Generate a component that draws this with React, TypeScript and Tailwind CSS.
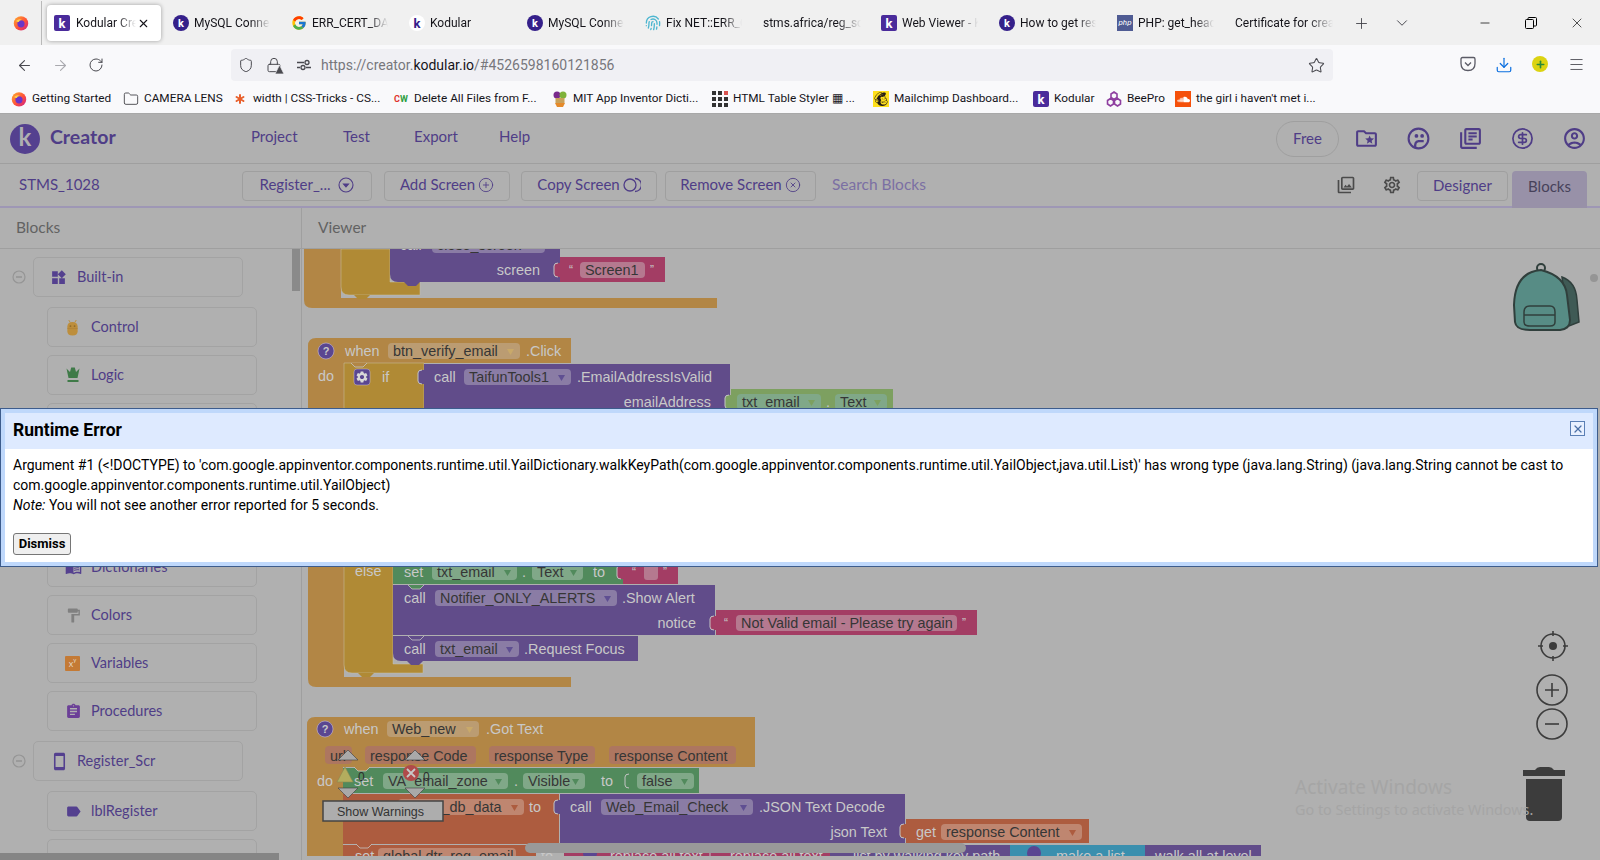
import {
  ArrowLeft,
  ArrowRight,
  Asterisk,
  ChevronDown,
  CircleDollarSign,
  CirclePlus,
  CircleX,
  Download,
  Fingerprint,
  Folder,
  Lock,
  Menu,
  Minus,
  Plus,
  RotateCw,
  Shield,
  Star,
  X,
} from 'lucide-react';
import type { ReactNode } from 'react';
import { FaSoundcloud } from 'react-icons/fa';
import { FcGoogle } from 'react-icons/fc';
import {
  MdAssignment,
  MdFormatPaint,
  MdLabel,
  MdMenuBook,
  MdOutlineAccountCircle,
  MdOutlineFolderSpecial,
  MdOutlineLibraryBooks,
  MdOutlinePhotoLibrary,
  MdOutlineSettings,
  MdOutlineSmartphone,
  MdSettings,
  MdWidgets,
} from 'react-icons/md';
import { SiMailchimp } from 'react-icons/si';

const KSquare = () => (
  <span className="flex h-4 w-4 items-center justify-center rounded-[2px] bg-[#4a2b9b] text-[13px] leading-none font-bold text-white">k</span>
);

const KRound = () => (
  <span className="flex h-4 w-4 items-center justify-center rounded-full bg-[#35208a] text-[11px] leading-none font-bold text-white">k</span>
);

const KPlain = () => (
  <span className="flex h-4 w-4 items-center justify-center rounded-full bg-white text-[13px] leading-none font-bold text-[#35208a]">k</span>
);

const FirefoxIcon = () => (
  <svg viewBox="0 0 16 16" className="h-4 w-4">
    <defs>
      <linearGradient id="ff" x1="0" y1="0" x2="1" y2="1">
        <stop offset="0" stopColor="#ffb02e" />
        <stop offset="0.55" stopColor="#ff4f3a" />
        <stop offset="1" stopColor="#c81e8f" />
      </linearGradient>
    </defs>
    <circle cx="8" cy="8.4" r="7.2" fill="url(#ff)" />
    <circle cx="8" cy="8.8" r="3.6" fill="#6a35c9" />
    <path d="M3 6 Q6 3 9 5 Q6 5 6 7 Q3.5 7 3 6Z" fill="#ffd24a" />
  </svg>
);

const PhpIcon = () => (
  <span className="flex h-4 w-4 items-center justify-center bg-[#4f5b93] text-[8px] leading-none text-white italic">php</span>
);

const CWIcon = () => (
  <span className="flex h-4 w-4 items-center justify-center text-[9px] leading-none font-bold">
    <span className="text-[#e0342b]">C</span>
    <span className="text-[#2c9e3f]">W</span>
  </span>
);

const MitIcon = () => (
  <svg viewBox="0 0 16 16" className="h-4 w-4">
    <circle cx="5" cy="4" r="3.5" fill="#7a2a8c" />
    <circle cx="11" cy="4" r="3.5" fill="#7fb23a" />
    <rect x="3.5" y="7" width="9" height="5" fill="#c9a15a" />
    <path d="M3 12 H13 L11 16 H5Z" fill="#e58a2a" />
  </svg>
);

const GridIcon = () => (
  <span className="grid h-4 w-4 grid-cols-3 gap-[1.5px]">
    {['#333', '#333', '#d9534f', '#333', '#333', '#333', '#333', '#333', '#333'].map((c, i) => (
      <span key={i} style={{ background: c }} />
    ))}
  </span>
);

const MailchimpIcon = () => (
  <span className="flex h-4 w-4 items-center justify-center bg-[#ffe01b]">
    <SiMailchimp className="h-[14px] w-[14px] text-[#241c15]" />
  </span>
);

const BeeIcon = () => (
  <svg viewBox="0 0 16 16" className="h-4 w-4" fill="none" stroke="#8f3fa0" strokeWidth="1.6">
    <path d="M8 1 L11 3 V6.5 L8 8.5 L5 6.5 V3Z" />
    <path d="M4.5 7.5 L7.5 9.5 V13 L4.5 15 L1.5 13 V9.5Z" />
    <path d="M11.5 7.5 L14.5 9.5 V13 L11.5 15 L8.5 13 V9.5Z" />
  </svg>
);

const tabs: { title: string; icon?: ReactNode }[] = [
  { title: 'MySQL Connection', icon: <KRound /> },
  { title: 'ERR_CERT_DATE_INVALID', icon: <FcGoogle className="h-4 w-4" /> },
  { title: 'Kodular', icon: <KPlain /> },
  { title: 'MySQL Connection', icon: <KRound /> },
  { title: 'Fix NET::ERR_CERT', icon: <Fingerprint className="h-4 w-4 text-[#4db6d0]" /> },
  { title: 'stms.africa/reg_screen' },
  { title: 'Web Viewer - Kodular', icon: <KSquare /> },
  { title: 'How to get response', icon: <KRound /> },
  { title: 'PHP: get_headers', icon: <PhpIcon /> },
  { title: 'Certificate for creator' },
];

function TabBar() {
  return (
    <div className="flex h-[45px] bg-[#f0f0f0] pt-[1px]">
      <div className="flex w-[42px] items-center justify-center border-r border-[#b9b9b9] pl-[1px]">
        <FirefoxIcon />
      </div>
      <div className="ml-[5px] flex h-[36px] w-[114px] items-center gap-[6px] self-center rounded-[4px] bg-white pl-[7px] shadow-[0_0_4px_rgba(0,0,0,0.35)]">
        <KSquare />
        <span className="mr-[-5px] w-[60px] overflow-hidden text-[12px] whitespace-nowrap text-[#15141a] [mask-image:linear-gradient(to_right,black_70%,transparent)]">Kodular Creator</span>
        <X className="h-[13px] w-[13px] text-[#15141a]" />
      </div>
      <div className="ml-[2px] flex">
        {tabs.map((tab, i) => (
          <div key={i} className="flex w-[118px] items-center gap-[5px] pl-[10px]">
            {tab.icon && <span className="h-4 w-4 shrink-0">{tab.icon}</span>}
            <span className={`${tab.icon ? 'w-[76px]' : 'w-[98px]'} overflow-hidden text-[12px] whitespace-nowrap text-[#15141a] [mask-image:linear-gradient(to_right,black_75%,transparent)]`}>{tab.title}</span>
          </div>
        ))}
      </div>
      <div className="flex w-[36px] items-center justify-center">
        <Plus className="h-[17px] w-[17px] text-[#3f3f46]" strokeWidth={1.25} />
      </div>
      <div className="flex w-[46px] items-center justify-center">
        <ChevronDown className="h-[18px] w-[18px] text-[#3f3f46]" strokeWidth={1.25} />
      </div>
      <div className="ml-auto flex">
        <div className="flex w-[46px] items-center justify-center">
          <Minus className="h-[14px] w-[14px] text-black" strokeWidth={1.25} />
        </div>
        <div className="flex w-[46px] items-center justify-center">
          <svg viewBox="0 0 12 12" className="h-[12px] w-[12px]" fill="none" stroke="#000" strokeWidth="1">
            <rect x="0.5" y="2.5" width="8" height="9" rx="1" />
            <path d="M3 2.5 V1.5 Q3 0.5 4 0.5 H10.5 Q11.5 0.5 11.5 1.5 V8 Q11.5 9 10.5 9 H8.5" />
          </svg>
        </div>
        <div className="flex w-[46px] items-center justify-center">
          <X className="h-[16px] w-[16px] text-black" strokeWidth={1} />
        </div>
      </div>
    </div>
  );
}

function NavBar() {
  return (
    <div className="flex h-[40px] items-center bg-[#f9f9fb] pl-[6px] pr-[6px]">
      <div className="flex w-[36px] justify-center">
        <ArrowLeft className="h-[17px] w-[17px] text-[#4a4a50]" strokeWidth={1.5} />
      </div>
      <div className="flex w-[36px] justify-center">
        <ArrowRight className="h-[17px] w-[17px] text-[#a9a9ae]" strokeWidth={1.5} />
      </div>
      <div className="flex w-[36px] justify-center">
        <RotateCw className="h-[16px] w-[16px] text-[#4a4a50]" strokeWidth={1.5} />
      </div>
      <div className="ml-[117px] flex h-[32px] w-[1102px] items-center rounded-[4px] bg-[#f0f0f4] pl-[7px] pr-[8px]">
        <Shield className="h-4 w-4 text-[#4a4a50]" strokeWidth={1.5} />
        <span className="relative ml-[12px] h-4 w-4">
          <Lock className="h-4 w-4 text-[#4a4a50]" strokeWidth={1.5} />
          <svg viewBox="0 0 10 10" className="absolute right-[-2px] bottom-[-1px] h-[9px] w-[9px]">
            <path d="M5 0 L10 10 H0Z" fill="#4a4a50" stroke="#f0f0f4" strokeWidth="0.8" />
          </svg>
        </span>
        <svg viewBox="0 0 16 16" className="ml-[14px] h-4 w-4" fill="none" stroke="#4a4a50" strokeWidth="1.3">
          <path d="M1 5.5 H8 M1 10.5 H4 M10 10.5 H15" />
          <circle cx="11" cy="5.5" r="2" />
          <circle cx="7" cy="10.5" r="2" />
        </svg>
        <span className="ml-[9px] text-[14px] whitespace-nowrap text-[#77777c]">
          https://creator.<span className="text-[#15141a]">kodular.io</span>/#4526598160121856
        </span>
        <Star className="ml-auto h-[17px] w-[17px] text-[#4a4a50]" strokeWidth={1.5} />
      </div>
      <div className="ml-auto flex">
        <div className="flex w-[36px] justify-center">
          <svg viewBox="0 0 16 16" className="h-4 w-4" fill="none" stroke="#5b5b66" strokeWidth="1.3">
            <path d="M2.5 1.5 H13.5 Q15 1.5 15 3 V7.5 Q15 14.5 8 14.5 Q1 14.5 1 7.5 V3 Q1 1.5 2.5 1.5Z" />
            <path d="M5 6.5 L8 9.5 L11 6.5" />
          </svg>
        </div>
        <div className="flex w-[36px] justify-center">
          <Download className="h-[18px] w-[18px] text-[#0b6fe0]" strokeWidth={1.6} />
        </div>
        <div className="flex w-[36px] justify-center">
          <span className="flex h-4 w-4 items-center justify-center rounded-full bg-[#dcd312]">
            <Plus className="h-[11px] w-[11px] text-[#2a8a3a]" strokeWidth={3.5} />
          </span>
        </div>
        <div className="flex w-[36px] justify-center">
          <Menu className="h-[17px] w-[17px] text-[#4a4a50]" strokeWidth={1.25} />
        </div>
      </div>
    </div>
  );
}

const bookmarks: { title: string; icon: ReactNode; width: string }[] = [
  { title: 'Getting Started', icon: <FirefoxIcon />, width: 'w-[112px]' },
  { title: 'CAMERA LENS', icon: <Folder className="h-4 w-4 text-[#4a4a50]" strokeWidth={1.4} />, width: 'w-[109px]' },
  { title: 'width | CSS-Tricks - CS...', icon: <Asterisk className="h-4 w-4 text-[#e8602c]" strokeWidth={3} />, width: 'w-[161px]' },
  { title: 'Delete All Files from F...', icon: <CWIcon />, width: 'w-[159px]' },
  { title: 'MIT App Inventor Dicti...', icon: <MitIcon />, width: 'w-[160px]' },
  { title: 'HTML Table Styler ▦ ...', icon: <GridIcon />, width: 'w-[161px]' },
  { title: 'Mailchimp Dashboard...', icon: <MailchimpIcon />, width: 'w-[160px]' },
  { title: 'Kodular', icon: <KSquare />, width: 'w-[73px]' },
  { title: 'BeePro', icon: <BeeIcon />, width: 'w-[69px]' },
  {
    title: "the girl i haven't met i...",
    icon: (
      <span className="flex h-4 w-4 items-center justify-center bg-[#f5500a]">
        <FaSoundcloud className="h-[13px] w-[13px] text-white" />
      </span>
    ),
    width: 'w-[160px]',
  },
];

function BookmarksBar() {
  return (
    <div className="flex h-[29px] items-center border-b border-[#a8a8a8] bg-[#f9f9fb] pl-[11px]">
      {bookmarks.map((b) => (
        <div key={b.title} className={`${b.width} flex items-center gap-[5px]`}>
          <span className="h-4 w-4 shrink-0">{b.icon}</span>
          <span className="text-[11.8px] whitespace-nowrap text-[#15141a]">{b.title}</span>
        </div>
      ))}
    </div>
  );
}

const purple = 'text-[#4f3d87]';

const FaceIcon = () => (
  <svg viewBox="0 0 24 24" className="h-[25px] w-[25px]" fill="none" stroke="currentColor" strokeWidth="2">
    <circle cx="12" cy="12" r="9.5" />
    <circle cx="10" cy="9.5" r="1.8" fill="currentColor" stroke="none" />
    <circle cx="15.5" cy="9.5" r="1.8" fill="currentColor" stroke="none" />
    <path d="M9 21 Q8 15 12 14.5 H17" strokeWidth="2.2" />
  </svg>
);

function AppHeader() {
  return (
    <div className="flex h-[50px] items-center border-b border-[#9f9f9f] font-['Lato',sans-serif]">
      <div className="flex w-[251px] items-center pl-[10px]">
        <span className="flex h-[30px] w-[30px] items-center justify-center rounded-full bg-[#54408f] pb-[3px] text-[24px] leading-none font-bold text-[#b0b0b0]">k</span>
        <span className={`ml-[10px] pb-[4px] text-[19.5px] font-bold ${purple}`}>Creator</span>
      </div>
      <div className={`flex pb-[4px] text-[15px] ${purple}`}>
        <span className="w-[92px]">Project</span>
        <span className="w-[71px]">Test</span>
        <span className="w-[85px]">Export</span>
        <span>Help</span>
      </div>
      <div className="ml-auto flex items-center">
        <span className={`mr-[1px] flex h-[36px] w-[63px] items-center justify-center rounded-full border border-[#9f9f9f] text-[15px] ${purple}`}>Free</span>
        <span className={`flex w-[52px] justify-center ${purple}`}>
          <MdOutlineFolderSpecial className="h-[25px] w-[25px]" />
        </span>
        <span className={`flex w-[52px] justify-center ${purple}`}>
          <FaceIcon />
        </span>
        <span className={`flex w-[52px] justify-center ${purple}`}>
          <MdOutlineLibraryBooks className="h-[25px] w-[25px]" />
        </span>
        <span className={`flex w-[52px] justify-center ${purple}`}>
          <CircleDollarSign className="h-[23px] w-[23px]" strokeWidth={1.8} />
        </span>
        <span className={`flex w-[52px] justify-center ${purple}`}>
          <MdOutlineAccountCircle className="h-[25px] w-[25px]" />
        </span>
      </div>
    </div>
  );
}

const DropCircle = () => (
  <svg viewBox="0 0 16 16" className="h-[16px] w-[16px]" fill="none" stroke="currentColor" strokeWidth="1.1">
    <circle cx="8" cy="8" r="7" />
    <path d="M5.5 7 H10.5 L8 10Z" fill="currentColor" />
  </svg>
);

const CopyCircle = () => (
  <svg viewBox="0 0 18 16" className="h-[16px] w-[18px]" fill="none" stroke="currentColor" strokeWidth="1.3">
    <circle cx="7" cy="8" r="6" />
    <path d="M12 1.5 A6.5 6.5 0 0 1 12 14.5" />
  </svg>
);

function ToolButton({ className, children }: { className: string; children: ReactNode }) {
  return (
    <div className={`${className} flex h-[30px] items-center justify-center rounded-[4px] border border-[#9f9f9f] pb-[3px] text-[15px] ${purple}`}>
      {children}
    </div>
  );
}

function ScreenBar() {
  return (
    <div className="flex h-[44px] items-start border-b-2 border-[#9e97b5] pt-[7px] font-['Lato',sans-serif]">
      <span className={`w-[242px] pl-[19px] text-[15px] leading-[27px] ${purple}`}>STMS_1028</span>
      <ToolButton className="w-[130px] gap-[8px]">
        Register_... <DropCircle />
      </ToolButton>
      <ToolButton className="ml-[12px] w-[126px] gap-[3px]">
        Add Screen <CirclePlus className="h-[16px] w-[16px]" strokeWidth={1.3} />
      </ToolButton>
      <ToolButton className="ml-[11px] w-[136px] gap-[3px]">
        Copy Screen <CopyCircle />
      </ToolButton>
      <ToolButton className="ml-[8px] w-[151px] gap-[3px]">
        Remove Screen <CircleX className="h-[16px] w-[16px]" strokeWidth={1.3} />
      </ToolButton>
      <span className="ml-[16px] text-[15.5px] leading-[27px] text-[#7b6fa3]">Search Blocks</span>
      <div className="ml-auto flex items-start pr-[13px]">
        <span className="mt-[4px] mr-[26px] text-[#4b4b4b]">
          <MdOutlinePhotoLibrary className="h-[20px] w-[20px]" />
        </span>
        <span className="mt-[4px] mr-[15px] text-[#4b4b4b]">
          <MdOutlineSettings className="h-[20px] w-[20px]" />
        </span>
        <span className={`flex h-[30px] w-[91px] items-center justify-center rounded-[4px] border border-[#9f9f9f] pb-[2px] text-[15px] ${purple}`}>Designer</span>
        <span className="ml-[4px] flex h-[37px] w-[75px] items-center justify-center rounded-t-[4px] bg-[#9891a8] pb-[6px] text-[15px] text-[#47425a]">Blocks</span>
      </div>
    </div>
  );
}

const MinusCircle = () => (
  <svg viewBox="0 0 14 14" className="h-[14px] w-[14px]" fill="none" stroke="#959595" strokeWidth="1.2">
    <circle cx="7" cy="7" r="6" />
    <path d="M4 7 H10" strokeWidth="1.6" />
  </svg>
);

const AndroidIcon = () => (
  <svg viewBox="0 0 16 18" className="h-[17px] w-[15px]">
    <path d="M4 1 L5.5 3.5 M12 1 L10.5 3.5" stroke="#bd8e3c" strokeWidth="1" />
    <path d="M2.5 8 Q2.5 3 8 3 Q13.5 3 13.5 8 V13 Q13.5 17.5 8 17.5 Q2.5 17.5 2.5 13Z" fill="#bd8e3c" />
    <circle cx="5.8" cy="7.5" r="1" fill="#8f6a2a" />
    <circle cx="10.2" cy="7.5" r="1" fill="#8f6a2a" />
    <path d="M2.5 10 H13.5" stroke="#a97f35" strokeWidth="0.6" />
  </svg>
);

const CrownIcon = () => (
  <svg viewBox="0 0 16 16" className="h-[16px] w-[16px]" fill="#3f7a48">
    <path d="M1.5 1.5 L5 5 L6.2 0.5 H9.8 L11 5 L14.5 1.5 L12.5 11 H3.5Z" />
    <rect x="2.5" y="13" width="11" height="2" />
  </svg>
);

const VarIcon = () => (
  <span className="flex h-[15px] w-[15px] items-center justify-center rounded-[1px] bg-[#c47a35] text-[9px] leading-none text-[#e3d5c3]">
    x<sup className="text-[6px]">y</sup>
  </span>
);

type SideItem = { label: string; icon: ReactNode; mt: string };

const builtin: SideItem[] = [
  { label: 'Control', icon: <AndroidIcon />, mt: 'mt-[10px]' },
  { label: 'Logic', icon: <CrownIcon />, mt: 'mt-[8px]' },
  { label: 'Math', icon: <span />, mt: 'mt-[8px]' },
  { label: 'Text', icon: <span />, mt: 'mt-[8px]' },
  { label: 'Lists', icon: <span />, mt: 'mt-[8px]' },
  { label: 'Dictionaries', icon: <MdMenuBook className="h-[17px] w-[17px] text-[#54408f]" />, mt: 'mt-[8px]' },
  { label: 'Colors', icon: <MdFormatPaint className="h-[17px] w-[17px] text-[#808080]" />, mt: 'mt-[8px]' },
  { label: 'Variables', icon: <VarIcon />, mt: 'mt-[8px]' },
  { label: 'Procedures', icon: <MdAssignment className="h-[17px] w-[17px] text-[#6b3f97]" />, mt: 'mt-[8px]' },
];

function ChildItem({ item }: { item: SideItem }) {
  return (
    <div className={`${item.mt} ml-[47px] flex h-[40px] w-[210px] shrink-0 items-center rounded-[5px] border border-[#a3a3a3] pl-[17px] text-[14.5px] ${purple}`}>
      <span className="flex w-[26px] shrink-0">{item.icon}</span>
      {item.label}
    </div>
  );
}

function GroupItem({ label, icon, className }: { label: string; icon: ReactNode; className: string }) {
  return (
    <div className={`${className} flex h-[40px] shrink-0 items-center`}>
      <span className="ml-[12px] w-[21px]">
        <MinusCircle />
      </span>
      <div className={`flex h-[40px] w-[210px] items-center rounded-[5px] border border-[#a3a3a3] pl-[16px] text-[14.5px] ${purple}`}>
        <span className="flex w-[27px] shrink-0">{icon}</span>
        {label}
      </div>
    </div>
  );
}

function Sidebar() {
  return (
    <div className="relative flex w-[302px] shrink-0 flex-col overflow-hidden border-r border-[#9f9f9f] font-['Lato',sans-serif]">
      <div className="flex h-[41px] shrink-0 items-center border-b border-[#9f9f9f] pl-[16px] text-[15.5px] text-[#626262]">Blocks</div>
      <div className="flex flex-col pt-[8px]">
        <GroupItem label="Built-in" icon={<MdWidgets className="h-[17px] w-[17px] text-[#54408f]" />} className="" />
        {builtin.map((item) => (
          <ChildItem key={item.label} item={item} />
        ))}
        <GroupItem label="Register_Scr" icon={<MdOutlineSmartphone className="h-[19px] w-[19px] text-[#54408f]" />} className="mt-[10px]" />
        <ChildItem item={{ label: 'lblRegister', icon: <MdLabel className="h-[17px] w-[17px] text-[#54408f]" />, mt: 'mt-[10px]' }} />
        <ChildItem item={{ label: '', icon: <span />, mt: 'mt-[8px]' }} />
      </div>
      {/* scrollbars */}
      <div className="absolute top-[41px] right-[1px] h-[42px] w-[8px] bg-[#8a8a8a]" />
      <div className="absolute bottom-0 left-0 h-[7px] w-[279px] bg-[#858585]" />
    </div>
  );
}

function Field({ x, y, w, label, fill, arrow, h = 16 }: { x: number; y: number; w: number; label: string; fill: string; arrow?: string; h?: number }) {
  return (
    <g>
      <rect x={x} y={y} width={w} height={h} rx={4} fill={fill} />
      <text x={x + 5} y={y + h - 3} fill="#363636">
        {label}
      </text>
      {arrow && <path d={`M${x + w - 13} ${y + 6} h7 l-3.5 6z`} fill={arrow} />}
    </g>
  );
}

function Label({ x, y, children, end }: { x: number; y: number; children: string; end?: boolean }) {
  return (
    <text x={x} y={y} fill="#c8c8c8" textAnchor={end ? 'end' : 'start'}>
      {children}
    </text>
  );
}

// value socket: small bump on the left edge of a block with a light arc
function Socket({ x, y, fill }: { x: number; y: number; fill: string }) {
  return (
    <g>
      <path d={`M${x} ${y - 7} h-3 q-4 0 -4 3 v8 q0 3 4 3 h3z`} fill={fill} />
      <path d={`M${x - 3} ${y - 7} q-4 0 -4 3 v8 q0 3 4 3`} fill="none" stroke="#c4c4c4" strokeWidth="1" />
    </g>
  );
}

// notch where a statement block hangs below the previous one
function Notch({ x, y, fill }: { x: number; y: number; fill: string }) {
  return <path d={`M${x} ${y} l4 4 h8 l4 -4`} fill={fill} stroke="#c4c4c4" strokeWidth="0.8" />;
}

function Tab({ x, y, fill }: { x: number; y: number; fill: string }) {
  return <path d={`M${x} ${y} h16 l-4 4 h-8z`} fill={fill} />;
}

function Help({ x, y }: { x: number; y: number }) {
  return (
    <g>
      <circle cx={x} cy={y} r={8} fill="#5a4691" stroke="#c8bcd8" strokeWidth="0.6" />
      <text x={x} y={y + 4} fill="#c8c8c8" textAnchor="middle" fontSize="11" fontWeight="bold">
        ?
      </text>
    </g>
  );
}

const OR = '#b28645';
const YE = '#b08a35';
const PU = '#614c8a';
const PK = '#a33d64';
const GR = '#518a5c';
const LG = '#7da060';
const RD = '#ad5c3f';
const FO = '#bb9c72';
const FP = '#8a7ca5';
const FG = '#80a888';
const FK = '#b5798f';
const FR = '#bf8670';

function Workspace() {
  return (
    <svg viewBox="302 249 1298 611" className="absolute inset-0 h-[611px] w-[1298px] font-['Liberation_Sans',sans-serif] text-[14.4px]">
      {/* close screen block */}
      <path d="M304 249 H341 V298 H717 V308 H312 Q304 308 304 300Z" fill={OR} />
      <path d="M341 249 H390 V282 H420 V295 H349 Q341 295 341 287Z" fill={YE} stroke="#c9c0a8" strokeWidth="0.5" />
      <Tab x={354} y={295} fill={YE} />
      <path d="M390 249 H560 V282 H398 Q390 282 390 274Z" fill={PU} />
      <Tab x={404} y={282} fill={PU} />
      <Label x={400} y={250}>call</Label>
      <Field x={432} y={237} w={113} label="close_screen" fill={FP} />
      <Label x={540} y={275} end>screen</Label>
      <rect x={560} y={257} width={105} height={25} fill={PK} />
      <Socket x={561} y={270} fill={PK} />
      <text x={569} y={274} fill="#c8c8c8" fontSize="12">“</text>
      <Field x={580} y={262} w={65} label="Screen1" fill={FK} />
      <text x={650} y={274} fill="#c8c8c8" fontSize="12">”</text>

      {/* btn_verify_email */}
      <path d="M316 338 H571 V363 H344 V677 H571 V687 H316 Q308 687 308 679 V346 Q308 338 316 338Z" fill={OR} />
      <path d="M344 363 H424 V500 H393 V664 H423 V673 H352 Q344 673 344 665Z" fill={YE} stroke="#c9c0a8" strokeWidth="0.5" />
      <Tab x={358} y={673} fill={YE} />
      <Notch x={351} y={363} fill={OR} />
      <Help x={326} y={351} />
      <Label x={345} y={356}>when</Label>
      <Field x={388} y={343} w={132} label="btn_verify_email" fill={FO} arrow="#c9a96a" />
      <Label x={526} y={356}>.Click</Label>
      <Label x={318} y={381}>do</Label>
      <rect x={354} y={369} width={16} height={16} rx={3} fill="#5a4691" stroke="#c8bcd8" strokeWidth="0.5" />
      <MdSettings x={355} y={370} size={14} color="#d8d8d8" />
      <Label x={382} y={382}>if</Label>
      <path d="M424 364 H730 V420 H424Z" fill={PU} />
      <Socket x={425} y={377} fill={PU} />
      <Label x={434} y={382}>call</Label>
      <Field x={464} y={369} w={107} label="TaifunTools1" fill={FP} arrow="#5f4f92" />
      <Label x={577} y={382}>.EmailAddressIsValid</Label>
      <Label x={711} y={407} end>emailAddress</Label>
      <rect x={731} y={389} width={162} height={25} fill={LG} />
      <Socket x={732} y={402} fill={LG} />
      <Field x={737} y={394} w={84} label="txt_email" fill={FG} arrow="#7da060" />
      <Label x={826} y={407}>.</Label>
      <Field x={835} y={394} w={52} label="Text" fill={FG} arrow="#7da060" />

      {/* else branch */}
      <Label x={355} y={576}>else</Label>
      <rect x={393} y={560} width={230} height={24} fill={GR} />
      <Label x={404} y={577}>set</Label>
      <Field x={432} y={564} w={85} label="txt_email" fill={FG} arrow="#518a5c" />
      <Label x={522} y={577}>.</Label>
      <Field x={532} y={564} w={51} label="Text" fill={FG} arrow="#518a5c" />
      <Label x={593} y={577}>to</Label>
      <rect x={623} y={560} width={55} height={24} fill={PK} />
      <Socket x={624} y={572} fill={PK} />
      <text x={632} y={576} fill="#c8c8c8" fontSize="12">“</text>
      <rect x={644} y={564} width={14} height={16} rx={3} fill={FK} />
      <text x={663} y={576} fill="#c8c8c8" fontSize="12">”</text>
      <path d="M393 585 H715 V635 H393Z" fill={PU} />
      <Notch x={408} y={585} fill={GR} />
      <Label x={404} y={603}>call</Label>
      <Field x={435} y={590} w={182} label="Notifier_ONLY_ALERTS" fill={FP} arrow="#5f4f92" />
      <Label x={622} y={603}>.Show Alert</Label>
      <Label x={696} y={628} end>notice</Label>
      <rect x={716} y={610} width={261} height={25} fill={PK} />
      <Socket x={717} y={623} fill={PK} />
      <text x={724} y={627} fill="#c8c8c8" fontSize="12">“</text>
      <Field x={736} y={615} w={221} label="Not Valid email - Please try again" fill={FK} />
      <text x={962} y={627} fill="#c8c8c8" fontSize="12">”</text>
      <path d="M393 636 H638 V661 H401 Q393 661 393 653Z" fill={PU} />
      <Notch x={408} y={636} fill={PU} />
      <Tab x={407} y={661} fill={PU} />
      <Label x={404} y={654}>call</Label>
      <Field x={435} y={641} w={84} label="txt_email" fill={FP} arrow="#5f4f92" />
      <Label x={524} y={654}>.Request Focus</Label>

      {/* Web_new Got Text */}
      <path d="M315 717 H755 V767 H343 V860 H307 V725 Q307 717 315 717Z" fill={OR} />
      <Help x={325} y={729} />
      <Label x={344} y={734}>when</Label>
      <Field x={387} y={721} w={92} label="Web_new" fill={FO} arrow="#c9a96a" />
      <Label x={486} y={734}>.Got Text</Label>
      <Field x={325} y={746} w={27} label="url" fill="#ad7660" h={18} />
      <Field x={365} y={746} w={111} label="response Code" fill="#ad7660" h={18} />
      <Field x={489} y={746} w={106} label="response Type" fill="#ad7660" h={18} />
      <Field x={609} y={746} w={127} label="response Content" fill="#ad7660" h={18} />
      <Label x={317} y={786}>do</Label>
      <path d="M343 768 H699 V793 H343Z" fill={GR} />
      <Notch x={354} y={767} fill={OR} />
      <Label x={354} y={786}>set</Label>
      <Field x={383} y={773} w={125} label="VA_email_zone" fill={FG} arrow="#518a5c" />
      <Label x={514} y={786}>.</Label>
      <Field x={523} y={773} w={62} label="Visible" fill={FG} arrow="#518a5c" />
      <Label x={601} y={786}>to</Label>
      <Socket x={632} y={781} fill={GR} />
      <Field x={637} y={773} w={57} label="false" fill={FG} arrow="#518a5c" />
      <path d="M343 794 H559 V844 H343Z" fill={RD} />
      <Field x={398} y={799} w={126} label="global_db_data" fill={FR} arrow="#ad5c3f" />
      <Label x={529} y={812}>to</Label>
      <path d="M560 794 H905 V843 H560Z" fill={PU} />
      <Socket x={561} y={807} fill={PU} />
      <Label x={570} y={812}>call</Label>
      <Field x={601} y={799} w={152} label="Web_Email_Check" fill={FP} arrow="#5f4f92" />
      <Label x={759} y={812}>.JSON Text Decode</Label>
      <Label x={887} y={837} end>json Text</Label>
      <rect x={906} y={819} width={183} height={24} fill={RD} />
      <Socket x={907} y={831} fill={RD} />
      <Label x={916} y={837}>get</Label>
      <Field x={941} y={824} w={141} label="response Content" fill={FR} arrow="#ad5c3f" />
      <rect x={343} y={845} width={193} height={15} fill={RD} />
      <Notch x={356} y={844} fill={RD} />
      <Label x={355} y={861}>set</Label>
      <Field x={378} y={848} w={138} label="global dtr_reg_email" fill={FR} />
      <Label x={541} y={861}>to</Label>
      <rect x={564} y={845} width={266} height={15} fill={PK} />
      <circle cx={590} cy={853} r={7} fill="#5a4691" />
      <Label x={610} y={861}>replace all text</Label>
      <Socket x={717} y={853} fill={PK} />
      <Label x={730} y={861}>replace all text</Label>
      <rect x={830} y={845} width={180} height={15} fill={PU} />
      <Label x={853} y={861}>list by walking key path</Label>
      <rect x={1010} y={845} width={135} height={15} fill="#3a8fae" />
      <circle cx={1034} cy={853} r={7} fill="#5a4691" />
      <Label x={1056} y={861}>make a list</Label>
      <rect x={1145} y={845} width={116} height={15} fill={PU} />
      <Label x={1155} y={861}>walk all at level</Label>

      {/* workspace scrollbar */}
      <rect x={525} y={843} width={441} height={10} rx={5} fill="#999999" />

      {/* warning indicators */}
      <path d="M348 750 L358 760 H338Z" fill="#a9a9a9" stroke="#3c3c3c" strokeWidth="0.6" />
      <path d="M415 750 L425 760 H405Z" fill="#a9a9a9" stroke="#3c3c3c" strokeWidth="0.6" />
      <path d="M345 767 L353 782 H337Z" fill="#b3ad5e" stroke="#8a8a50" strokeWidth="0.6" />
      <text x={358} y={781} fill="#2c2c2c" fontSize="12">0</text>
      <circle cx={411} cy={773} r={8} fill="#b04a4a" />
      <path d="M407 769 L415 777 M415 769 L407 777" stroke="#c8c8c8" strokeWidth="1.8" />
      <text x={423} y={781} fill="#2c2c2c" fontSize="12">0</text>
      <path d="M338 788 H358 L348 798Z" fill="#a9a9a9" stroke="#3c3c3c" strokeWidth="0.6" />
      <path d="M405 788 H425 L415 798Z" fill="#a9a9a9" stroke="#3c3c3c" strokeWidth="0.6" />
      <rect x={323} y={801} width={120} height={20} fill="#adadad" stroke="#444" strokeWidth="1.5" />
      <text x={337} y={816} fill="#333" fontSize="12.5">Show Warnings</text>

      {/* backpack */}
      <circle cx={1594} cy={278} r={4} fill="#959595" />
      <path d="M1562 277 Q1576 282 1577 300 L1579 322 L1569 326 Z" fill="#3f5a55" stroke="#303f3c" strokeWidth="1.5" />
      <circle cx={1541} cy={268} r={4} fill="none" stroke="#303f3c" strokeWidth="2" />
      <path d="M1541 270 Q1515 272 1514 305 L1515 322 Q1516 330 1530 330 H1560 Q1570 329 1570 320 L1567 295 Q1565 276 1541 270Z" fill="#578c85" stroke="#303f3c" strokeWidth="2" />
      <path d="M1524 312 Q1524 306 1530 306 H1550 Q1555 306 1555 312 V322 Q1555 326 1550 326 H1530 Q1524 326 1524 322Z" fill="#578c85" stroke="#303f3c" strokeWidth="1.5" />
      <path d="M1524 315 H1555" stroke="#303f3c" strokeWidth="1.5" />

      {/* target + zoom controls */}
      <circle cx={1553} cy={646} r={12} fill="none" stroke="#3c3c3c" strokeWidth="1.6" />
      <circle cx={1553} cy={646} r={4} fill="#3c3c3c" />
      <path d="M1553 631 V636 M1553 656 V661 M1538 646 H1543 M1563 646 H1568" stroke="#3c3c3c" strokeWidth="1.6" />
      <circle cx={1552} cy={690} r={15} fill="none" stroke="#3c3c3c" strokeWidth="1.6" />
      <path d="M1545 690 H1559 M1552 683 V697" stroke="#3c3c3c" strokeWidth="1.6" />
      <circle cx={1552} cy={724} r={15} fill="none" stroke="#3c3c3c" strokeWidth="1.6" />
      <path d="M1545 724 H1559" stroke="#3c3c3c" strokeWidth="1.6" />

      {/* trash */}
      <path d="M1523 770 H1535 Q1537 767 1540 767 H1549 Q1552 767 1554 770 H1565 V776 H1523Z" fill="#3c3c3c" />
      <path d="M1526 779 H1562 V817 Q1562 821 1558 821 H1530 Q1526 821 1526 817Z" fill="#3c3c3c" />
    </svg>
  );
}

function Viewer() {
  return (
    <div className="flex flex-1 flex-col">
      <div className="flex h-[41px] shrink-0 items-center border-b border-[#9f9f9f] pl-[16px] font-['Lato',sans-serif] text-[15.5px] text-[#626262]">Viewer</div>
      <div className="relative mb-[4px] flex-1 overflow-hidden">
        <Workspace />
      </div>
    </div>
  );
}

function RuntimeError() {
  return (
    <div className="absolute top-[408px] left-0 h-[159px] w-[1598px] border border-[#3d5c8c] font-['Roboto',sans-serif]">
      <div className="h-full w-full border-4 border-[#bfd8fb] bg-white">
        <div className="relative flex h-[36px] items-center bg-[#deeaff] pb-[1px] pl-[8px] text-[17.5px] font-bold text-black">
          Runtime Error
          <span className="absolute top-[8px] right-[8px] flex h-[15px] w-[15px] items-center justify-center border border-[#5a7fb5] bg-[#e8f0ff]">
            <X className="h-[12px] w-[12px] text-[#4a6fa5]" strokeWidth={2.5} />
          </span>
        </div>
        <div className="px-[8px] pt-[6px] text-[14px] leading-[20px] text-black">
          <p>
            Argument #1 (&lt;!DOCTYPE) to 'com.google.appinventor.components.runtime.util.YailDictionary.walkKeyPath(com.google.appinventor.components.runtime.util.YailObject,java.util.List)' has wrong type (java.lang.String) (java.lang.String cannot be cast to com.google.appinventor.components.runtime.util.YailObject)
          </p>
          <p>
            <em>Note:</em> You will not see another error reported for 5 seconds.
          </p>
          <button className="mt-[18px] flex h-[22px] w-[58px] items-center justify-center rounded-[3px] border border-[#767676] bg-[#efefef] text-[13px] font-bold text-black">Dismiss</button>
        </div>
      </div>
    </div>
  );
}

export default function App() {
  return (
    <div className="relative flex h-[860px] w-[1600px] flex-col overflow-hidden bg-[#b0b0b0] font-['Roboto',sans-serif]">
      <TabBar />
      <NavBar />
      <BookmarksBar />
      <AppHeader />
      <ScreenBar />
      <div className="flex min-h-0 flex-1">
        <Sidebar />
        <Viewer />
      </div>
      <RuntimeError />
      {/* windows watermark */}
      <div className="absolute top-[773px] left-[1295px] font-['Noto_Sans',sans-serif] text-[#a5a5a5]">
        <p className="text-[19px] leading-[28px]">Activate Windows</p>
        <p className="text-[14.4px] leading-[18px]">Go to Settings to activate Windows.</p>
      </div>
    </div>
  );
}
